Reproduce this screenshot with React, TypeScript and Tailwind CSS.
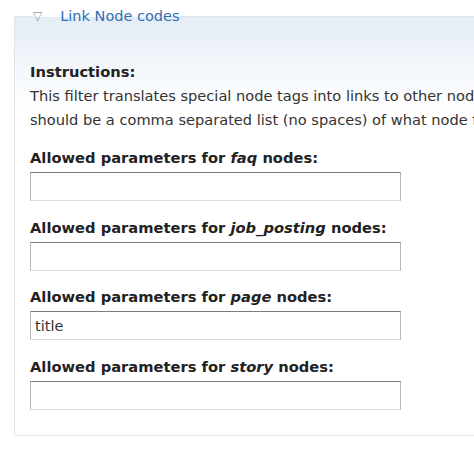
import React from "react";

const fields = [
  { type: "faq", value: "" },
  { type: "job_posting", value: "" },
  { type: "page", value: "title" },
  { type: "story", value: "" },
];

const App = () => {
  return (
    <div className="w-[474px] h-[452px] overflow-hidden bg-white font-['DejaVu_Sans',Verdana,sans-serif] text-[14.6px] text-[#333]">
      <fieldset className="ml-[14px] mt-[6px] w-[520px] h-[430px] border border-[#dde6ee] bg-gradient-to-b from-[#e4ecf5] via-white via-[22%] to-white px-[15px]">
        <legend className="ml-[3px] leading-[20px]">
          <a href="#" className="flex items-center text-[14.5px] text-[#2f6fb3]">
            <span className="text-[12px] text-[#999] mr-[18px]">▽</span>
            Link Node codes
          </a>
        </legend>

        <div className="mt-[34px]">
          <div className="font-bold text-[14.7px] text-[#222] leading-[24px]">Instructions:</div>
          <p className="leading-[24px] whitespace-nowrap">
            This filter translates special node tags into links to other nodes.
            <br />
            should be a comma separated list (no spaces) of what node fields
          </p>
        </div>

        {fields.map((f, i) => (
          <div key={f.type} className={i === 0 ? "mt-[16px]" : "mt-[16.5px]"}>
            <label className="block font-bold text-[14.7px] text-[#222] leading-[20px]">
              Allowed parameters for <em>{f.type}</em> nodes:
            </label>
            <input
              type="text"
              defaultValue={f.value}
              className="mt-[4px] block w-[371px] h-[29px] px-[4px] bg-white text-[14.5px] text-[#333] border border-[#b8b8b8] border-t-[#7c7c7c] border-b-[#dcdcdc] outline-none"
            />
          </div>
        ))}
      </fieldset>
    </div>
  );
};

export default App;
